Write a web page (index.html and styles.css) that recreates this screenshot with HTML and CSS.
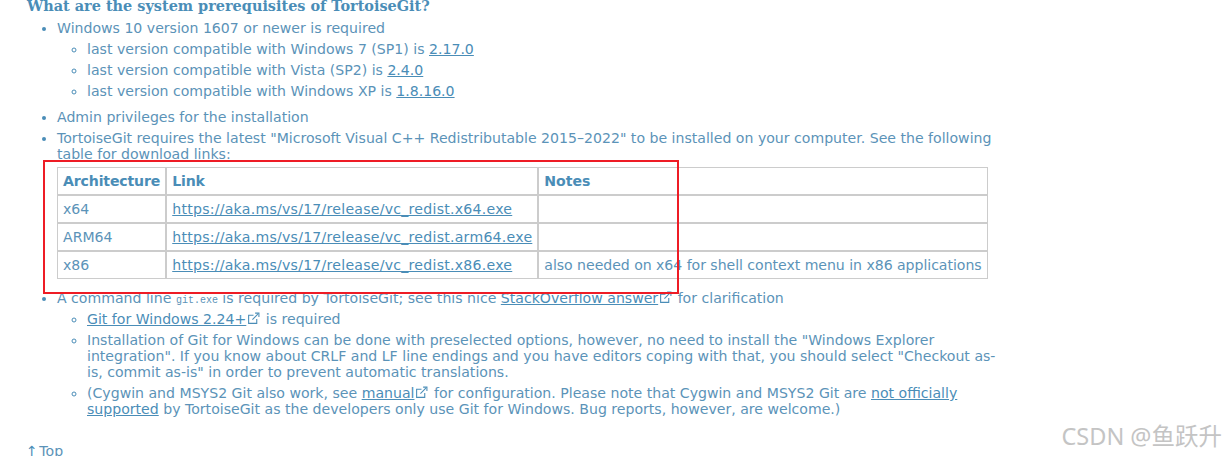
FILE: index.html
```html
<!DOCTYPE html>
<html lang="en">
<head>
<meta charset="utf-8">
<title>TortoiseGit FAQ</title>
<link rel="stylesheet" href="styles.css">
</head>
<body>
<main class="content">
  <h3 class="question">What are the system prerequisites of TortoiseGit?</h3>
  <ul class="list">
    <li>Windows 10 version 1607 or newer is required
      <ul class="sublist sublist-first">
        <li>last version compatible with Windows 7 (SP1) is <a href="#">2.17.0</a></li>
        <li>last version compatible with Vista (SP2) is <a href="#">2.4.0</a></li>
        <li>last version compatible with Windows XP is <a href="#">1.8.16.0</a></li>
      </ul>
    </li>
    <li>Admin privileges for the installation</li>
    <li>TortoiseGit requires the latest "Microsoft Visual C++ Redistributable 2015–2022" to be installed on your computer. See the following table for download links:
      <table class="links">
        <thead>
          <tr><th>Architecture</th><th>Link</th><th>Notes</th></tr>
        </thead>
        <tbody>
          <tr><td>x64</td><td><a href="#">https://aka.ms/vs/17/release/vc_redist.x64.exe</a></td><td></td></tr>
          <tr><td>ARM64</td><td><a href="#">https://aka.ms/vs/17/release/vc_redist.arm64.exe</a></td><td></td></tr>
          <tr><td>x86</td><td><a href="#">https://aka.ms/vs/17/release/vc_redist.x86.exe</a></td><td>also needed on x64 for shell context menu in x86 applications</td></tr>
        </tbody>
      </table>
    </li>
    <li>A command line <code>git.exe</code> is required by TortoiseGit; see this nice <a href="#">StackOverflow answer</a><svg class="ext" viewBox="0 0 12 12" aria-hidden="true"><path d="M9 6.5V10.5H1.5V3H6" fill="none" stroke="currentColor"/><path d="M5 7 10 2M7.5 1H11V4.5" fill="none" stroke="currentColor"/></svg> for clarification
      <ul class="sublist">
        <li><a href="#">Git for Windows 2.24+</a><svg class="ext" viewBox="0 0 12 12" aria-hidden="true"><path d="M9 6.5V10.5H1.5V3H6" fill="none" stroke="currentColor"/><path d="M5 7 10 2M7.5 1H11V4.5" fill="none" stroke="currentColor"/></svg> is required</li>
        <li>Installation of Git for Windows can be done with preselected options, however, no need to install the "Windows Explorer integration". If you know about CRLF and LF line endings and you have editors coping with that, you should select "Checkout as-is, commit as-is" in order to prevent automatic translations.</li>
        <li>(Cygwin and MSYS2 Git also work, see <a href="#">manual</a><svg class="ext" viewBox="0 0 12 12" aria-hidden="true"><path d="M9 6.5V10.5H1.5V3H6" fill="none" stroke="currentColor"/><path d="M5 7 10 2M7.5 1H11V4.5" fill="none" stroke="currentColor"/></svg> for configuration. Please note that Cygwin and MSYS2 Git are <a href="#">not officially supported</a> by TortoiseGit as the developers only use Git for Windows. Bug reports, however, are welcome.)</li>
      </ul>
    </li>
  </ul>
  <p class="top"><span class="arrow">↑</span> Top</p>
</main>
<div class="annotation"></div>
<div class="watermark">CSDN @鱼跃升</div>
</body>
</html>
```
FILE: styles.css
```css
html, body {
  margin: 0;
  height: 456px;
  overflow: hidden;
  background: #fff;
}
body {
  position: relative;
  font-family: "DejaVu Sans", Verdana, sans-serif;
  font-size: 14.1px;
  line-height: 16px;
  color: #5b93b8;
}
.content {
  width: 973px;
  padding: 0 0 0 27px;
}
.question {
  margin: -2px 0 0;
  height: 16px;
  font-family: "DejaVu Serif", serif;
  font-size: 14.45px;
  line-height: 16px;
  font-weight: 700;
  color: #4a8db7;
}
.list {
  margin: 6px 0 0;
  padding: 0 0 0 30px;
  list-style: disc;
}
.list > li {
  margin-bottom: 5px;
}
.list li::marker {
  color: #4a8db7;
}
.sublist {
  margin: 5px 0 10px;
  padding: 0 0 0 30px;
  list-style: circle;
}
.sublist li {
  margin-bottom: 5px;
}
a {
  color: #4a8db7;
  text-decoration: underline;
}
code {
  font-family: "Liberation Mono", monospace;
  font-size: 10px;
  line-height: 0;
}
.ext {
  width: 13px;
  height: 13px;
  margin: -3px 1px -3px 1px;
  vertical-align: 2px;
  color: #4a8db7;
}
.links {
  border-collapse: collapse;
  margin: 5px 0 11px;
  width: 931px;
}
.links th, .links td {
  height: 28px;
  box-sizing: border-box;
  border: 2px solid #ccc;
  padding: 0 5px;
  text-align: left;
  white-space: nowrap;
  width: 1%;
}
.links th {
  height: 27px;
  letter-spacing: -0.15px;
}
.links a {
  letter-spacing: 0.25px;
}
.links tr > :first-child { border-left-width: 1px; }
.links tr > :last-child { border-right-width: 1px; width: auto; letter-spacing: -0.04px; }
.links thead th { border-top-width: 1px; font-weight: 700; color: #4a8db7; }
.links tbody tr:last-child td { border-bottom-width: 1px; }
.top {
  margin: 26px 0 0;
}
.arrow {
  margin: 0 -3px 0 -1px;
  color: #4a8db7;
}
.annotation {
  position: absolute;
  left: 43px;
  top: 160px;
  width: 632px;
  height: 130px;
  border: 2px solid #ee1c25;
}
.watermark {
  position: absolute;
  right: 3px;
  top: 420px;
  font-family: "Noto Sans", "Noto Sans CJK SC", sans-serif;
  font-size: 23.5px;
  line-height: 32px;
  color: #c4c4c4;
}
```
